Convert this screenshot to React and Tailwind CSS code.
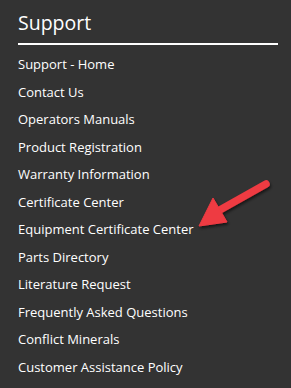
import React from 'react';

const links = [
  'Support - Home',
  'Contact Us',
  'Operators Manuals',
  'Product Registration',
  'Warranty Information',
  'Certificate Center',
  'Equipment Certificate Center',
  'Parts Directory',
  'Literature Request',
  'Frequently Asked Questions',
  'Conflict Minerals',
  'Customer Assistance Policy',
];

const Arrow = () => (
  <svg className="absolute left-0 top-0 pointer-events-none" width="291" height="388" viewBox="0 0 291 388">
    <defs>
      <filter id="sh" x="-20%" y="-20%" width="140%" height="140%">
        <feDropShadow dx="1" dy="2" stdDeviation="1.5" floodColor="#000" floodOpacity="0.6" />
      </filter>
    </defs>
    <g filter="url(#sh)" fill="#ee3a42" stroke="#ee3a42">
      <line x1="266" y1="184" x2="218" y2="211" strokeWidth="7.5" strokeLinecap="round" />
      <polygon points="199,226 213,198 227,222" strokeWidth="1" strokeLinejoin="round" />
    </g>
  </svg>
);

export default function App() {
  return (
    <div className="relative w-[291px] h-[388px] bg-[#333333] overflow-hidden" style={{ fontFamily: '"Open Sans", "Noto Sans", sans-serif' }}>
      <div className="pl-[18px] pr-[13px] pt-[10px]">
        <h2 className="text-[19.5px] leading-[26px] text-white font-normal">Support</h2>
        <div className="mt-[7px] h-[2px] bg-white" />
        <ul className="mt-[7px] flex flex-col">
          {links.map((l) => (
            <li key={l} className="h-[27.5px] text-[13px] leading-[24px] text-white">{l}</li>
          ))}
        </ul>
      </div>
      <Arrow />
    </div>
  );
}
